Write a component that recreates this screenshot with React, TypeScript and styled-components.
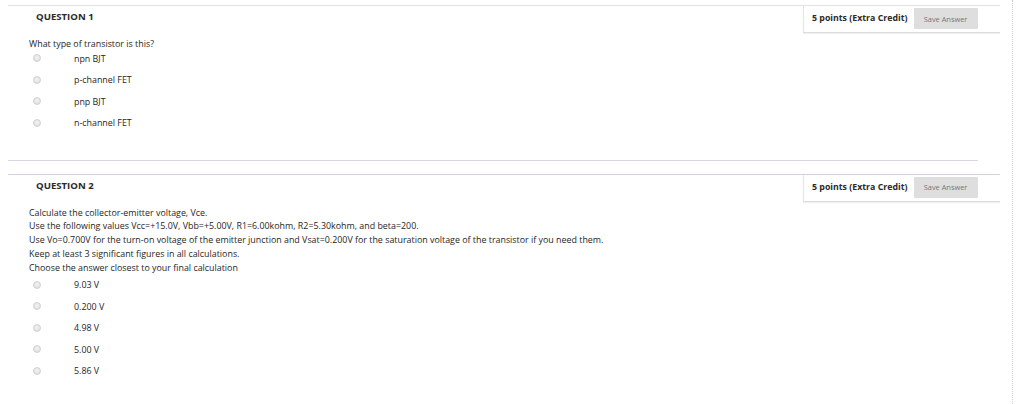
import React from "react";
import styled, { createGlobalStyle } from "styled-components";

const GlobalStyle = createGlobalStyle`
  html, body { margin: 0; padding: 0; background: #ffffff; }
  body { font-family: "Open Sans", "Noto Sans", "Liberation Sans", sans-serif; color: #333; }
`;

const Page = styled.div`
  display: flex;
  min-height: 404px;
  padding-top: 5px;
  box-sizing: border-box;
`;

const Main = styled.div`
  width: 992px;
  margin-left: 8px;
  display: flex;
  flex-direction: column;
`;

const RightRule = styled.div`
  margin-left: 12px;
  margin-top: -5px;
  width: 0;
  border-left: 1px dotted #cfcfcf;
  min-height: 404px;
`;

const Question = styled.section<{ $last?: boolean }>`
  display: flex;
  flex-direction: column;
  margin-bottom: ${(p) => (p.$last ? "0" : "13px")};
`;

const Header = styled.div<{ $tint?: boolean }>`
  display: flex;
  justify-content: space-between;
  height: 27px;
  border-top: 1px solid ${(p) => (p.$tint ? "#d6cfdb" : "#e2e2e2")};
`;

const Title = styled.h2`
  margin: 0;
  padding: 4px 0 0 28px;
  font-size: 9.6px;
  line-height: 13px;
  font-weight: 700;
  color: #2a2a2a;
`;

const PointsBox = styled.div`
  display: flex;
  align-items: flex-start;
  gap: 6px;
  width: 197px;
  box-sizing: border-box;
  padding: 2px 22px 0 8px;
  border-left: 1px solid #e4e4e4;
  border-bottom: 1px solid #dcdcdc;
  box-shadow: 0 1px 1px rgba(0, 0, 0, 0.06);
`;

const Points = styled.span`
  font-size: 8.8px;
  font-weight: 700;
  line-height: 20px;
  color: #2a2a2a;
  white-space: nowrap;
`;

const SaveButton = styled.button`
  width: 64px;
  height: 21px;
  border: none;
  border-radius: 1px;
  background: #dedede;
  color: #767676;
  font-family: "Open Sans", "Liberation Sans", sans-serif;
  font-size: 7.4px;
  padding: 0;
  cursor: pointer;
`;

const Body = styled.div<{ $ruled?: boolean }>`
  margin-right: ${(p) => (p.$ruled ? "22px" : "0")};
  padding: 4px 0 ${(p) => (p.$ruled ? "26px" : "0")} 21px;
  border-bottom: ${(p) => (p.$ruled ? "1px solid #dcd6e0" : "none")};
`;

const Prompt = styled.div<{ $tight?: boolean }>`
  font-size: 8.9px;
  line-height: 13.7px;
  color: #262626;
  margin-bottom: ${(p) => (p.$tight ? "-3px" : "0")};
`;

const Options = styled.ul`
  list-style: none;
  margin: 0;
  padding: 0;
`;

const Option = styled.li`
  display: flex;
  align-items: center;
  height: 21.5px;
`;

const Radio = styled.span`
  width: 6px;
  height: 6px;
  margin-left: 4px;
  border-radius: 50%;
  border: 1px solid #d2d2d2;
  background: radial-gradient(circle at 50% 40%, #f4f4f4 0%, #e4e4e4 60%, #d4d4d4 100%);
  flex: none;
`;

const Label = styled.span`
  margin-left: 33px;
  font-size: 8.9px;
  color: #262626;
`;

type Q = {
  title: string;
  prompt: string[];
  options: string[];
};

const questions: Q[] = [
  {
    title: "QUESTION 1",
    prompt: ["What type of transistor is this?"],
    options: ["npn BJT", "p-channel FET", "pnp BJT", "n-channel FET"],
  },
  {
    title: "QUESTION 2",
    prompt: [
      "Calculate the collector-emitter voltage, Vce.",
      "Use the following values Vcc=+15.0V, Vbb=+5.00V, R1=6.00kohm, R2=5.30kohm, and beta=200.",
      "Use Vo=0.700V for the turn-on voltage of the emitter junction and Vsat=0.200V for the saturation voltage of the transistor if you need them.",
      "Keep at least 3 significant figures in all calculations.",
      "Choose the answer closest to your final calculation",
    ],
    options: ["9.03 V", "0.200 V", "4.98 V", "5.00 V", "5.86 V"],
  },
];

export default function App() {
  return (
    <>
      <GlobalStyle />
      <Page>
        <Main>
          {questions.map((q, i) => {
            const last = i === questions.length - 1;
            return (
              <Question key={q.title} $last={last}>
                <Header $tint={i > 0}>
                  <Title>{q.title}</Title>
                  <PointsBox>
                    <Points>5 points (Extra Credit)</Points>
                    <SaveButton>Save Answer</SaveButton>
                  </PointsBox>
                </Header>
                <Body $ruled={!last}>
                  <Prompt $tight={q.prompt.length === 1}>
                    {q.prompt.map((line) => (
                      <div key={line}>{line}</div>
                    ))}
                  </Prompt>
                  <Options>
                    {q.options.map((o) => (
                      <Option key={o}>
                        <Radio />
                        <Label>{o}</Label>
                      </Option>
                    ))}
                  </Options>
                </Body>
              </Question>
            );
          })}
        </Main>
        <RightRule />
      </Page>
    </>
  );
}
